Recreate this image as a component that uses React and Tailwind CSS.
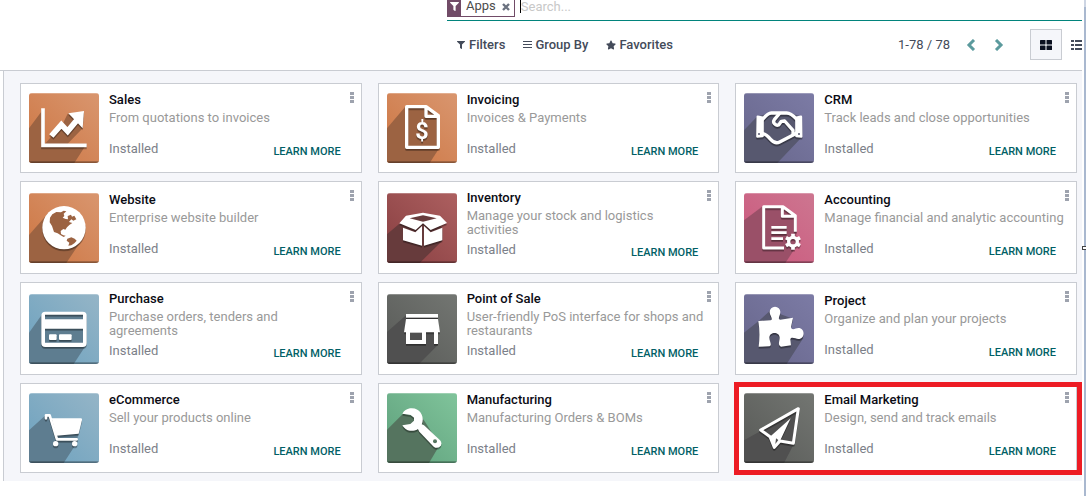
import { FaFilter, FaStar } from "react-icons/fa";

const TONES = {
  orange: { from: "#cf7c4b", to: "#d9966f", shade: "#9c6342" },
  purple: { from: "#6b6a90", to: "#7c7ba5", shade: "#57586f" },
  red: { from: "#8f4547", to: "#ad6060", shade: "#673b3c" },
  pink: { from: "#cb5d80", to: "#cd7690", shade: "#9a5068" },
  blue: { from: "#74a5c0", to: "#95b5c7", shade: "#5e7d90" },
  gray: { from: "#5d5f5c", to: "#737672", shade: "#505050" },
  green: { from: "#64a681", to: "#80c49b", shade: "#55745f" },
};

const APPS = [
  { id: "sales", name: "Sales", text: "From quotations to invoices", tone: "orange" },
  { id: "invoicing", name: "Invoicing", text: "Invoices & Payments", tone: "orange" },
  { id: "crm", name: "CRM", text: "Track leads and close opportunities", tone: "purple" },
  { id: "website", name: "Website", text: "Enterprise website builder", tone: "orange" },
  { id: "inventory", name: "Inventory", text: "Manage your stock and logistics activities", tone: "red" },
  { id: "accounting", name: "Accounting", text: "Manage financial and analytic accounting", tone: "pink" },
  { id: "purchase", name: "Purchase", text: "Purchase orders, tenders and agreements", tone: "blue" },
  { id: "pos", name: "Point of Sale", text: "User-friendly PoS interface for shops and restaurants", tone: "gray" },
  { id: "project", name: "Project", text: "Organize and plan your projects", tone: "purple" },
  { id: "ecommerce", name: "eCommerce", text: "Sell your products online", tone: "blue" },
  { id: "manufacturing", name: "Manufacturing", text: "Manufacturing Orders & BOMs", tone: "green" },
  { id: "email", name: "Email Marketing", text: "Design, send and track emails", tone: "gray", highlighted: true },
];

// long diagonal shadow behind each glyph, in the 210 unit icon box
const SHADES = {
  sales: "M0 106L37 56V163L48 152L68 130L99 97L116 62L165 56L161 106L116 152H173L136 210H0Z",
  invoicing: "M0 106L56 40H117L157 68V165L128 210H0Z",
  crm: "M0 112L38 72L75 60H140L174 72V132L100 210H0Z",
  website: "M0 126L58 60L152 150L112 210H0Z",
  inventory: "M0 124L37 92L108 64L166 104V143L98 210H0Z",
  accounting: "M0 82L56 40H117L157 68V160L124 210H0Z",
  purchase: "M0 116L40 60H170V155L134 210H0Z",
  pos: "M0 114L57 64H153V152L96 210H0Z",
  project: "M0 116L43 82L78 50L108 60L147 74L140 107L178 132L128 210H0Z",
  ecommerce: "M0 112L48 68L68 78H156L143 150L104 210H0Z",
  manufacturing: "M0 110L48 62L110 80L158 156L126 210H0Z",
  email: "M0 142L50 114L160 52L150 152L120 210H0Z",
};

function Glyph({ id, shade }) {
  switch (id) {
    case "sales":
      return (
        <>
          <path d="M42 46V157H173" fill="none" stroke="#fff" strokeWidth="11" />
          <path d="M67 129L97 95L116 115L145 80" fill="none" stroke="#fff" strokeWidth="17" />
          <path d="M165 54L118 61L161 106Z" fill="#fff" />
        </>
      );
    case "invoicing":
      return (
        <>
          <path d="M59 41H117L154 68V163H59ZM117 41V70H154" fill="none" stroke="#fff" strokeWidth="10" strokeLinejoin="round" />
          <text x="105" y="139" fill="#fff" textAnchor="middle" fontSize="70" fontWeight="700">$</text>
        </>
      );
    case "crm":
      return (
        <>
          <path d="M41 71L56 74V129L40 131Z" fill="#fff" stroke="#fff" strokeWidth="7" strokeLinejoin="round" />
          <path d="M171 71L157 74V129L172 131Z" fill="#fff" stroke="#fff" strokeWidth="7" strokeLinejoin="round" />
          <g fill="none" stroke="#fff" strokeWidth="10" strokeLinecap="round" strokeLinejoin="round">
            <path d="M57 78C66 67 73 60 82 60H128C138 60 148 68 157 78" />
            <path d="M57 122C66 124 73 131 80 139C88 148 98 152 107 147L146 127L157 120" />
            <path d="M106 62L91 80C85 88 94 100 104 96L112 85L122 84L147 112V124" />
          </g>
          <circle cx="45" cy="123" r="3" fill={shade} />
          <circle cx="165" cy="123" r="3" fill={shade} />
        </>
      );
    case "website":
      return (
        <>
          <circle cx="105" cy="104" r="65" fill="#fff" />
          <path
            d="M63 74L70 64L82 57L96 58L104 53L112 55L104 62L106 69L101 74L110 78L117 79L116 69L126 65L129 71L136 68L142 79L133 83L127 79L120 87L130 90L121 96L114 103L109 110L103 108L95 114L96 123L103 127L110 128L104 132L95 127L86 121L75 117L69 99L62 88Z"
            fill={shade}
          />
          <path d="M115 137L127 133L137 137L143 143L136 151L127 157L118 158L121 149L113 143Z" fill={shade} />
        </>
      );
    case "inventory":
      return (
        <>
          <path d="M37 91L57 68L108 59L159 68L180 90L131 111L108 91L86 111Z" fill="#fff" />
          <path d="M68 76L108 67L149 76L108 86Z" fill={shade} />
          <path d="M48 104L85 118L105 99V158L48 142Z" fill="#fff" />
          <path d="M111 99L131 118L166 104V142L111 158Z" fill="#fff" />
        </>
      );
    case "accounting":
      return (
        <>
          <g fill="none" stroke="#fff" strokeWidth="9" strokeLinejoin="round">
            <path d="M120 165H59V41H117L154 68V116M115 41V70H154" />
            <path d="M82 103H128M82 119H128M82 137H117" strokeWidth="8" />
          </g>
          <g transform="translate(147 146)">
            <circle r="13" fill="none" stroke="#fff" strokeWidth="10" />
            <path d="M0 -24V-14M0 24V14M21 -12L12 -7M21 12L12 7M-21 -12L-12 -7M-21 12L-12 7" stroke="#fff" strokeWidth="11" />
          </g>
        </>
      );
    case "purchase":
      return (
        <>
          <path
            d="M49 53H161Q173 53 173 65V147Q173 159 161 159H49Q37 159 37 147V65Q37 53 49 53ZM48 62V76H162V62ZM48 104V146H162V104Z"
            fill="#fff"
            fillRule="evenodd"
          />
          <rect x="60" y="121" width="23" height="17" rx="3" fill="#fff" />
          <rect x="90" y="121" width="38" height="17" rx="3" fill="#fff" />
        </>
      );
    case "pos":
      return (
        <>
          <path d="M57 60H153V71H57Z" fill="#fff" />
          <path d="M57 75H153L159 115H153V150H141V115H117V150H57V115H51Z" fill="#fff" />
          <path d="M69 116H105V138H69Z" fill={shade} />
        </>
      );
    case "project":
      return (
        <path
          d="M43 81L80 79C89 77 77 64 77 54A16 16 0 0 1 109 54C109 64 99 76 109 77L147 71L141 99C143 112 155 102 163 102C184 102 184 135 163 135C155 135 142 126 139 136L141 154L111 158C100 154 107 142 107 131C107 112 76 112 76 131C76 142 86 153 76 157L44 158Q49 118 43 81Z"
          fill="#fff"
        />
      );
    case "ecommerce":
      return (
        <>
          <path d="M51 76V67H62L84 139H143" fill="none" stroke="#fff" strokeWidth="8" strokeLinejoin="round" strokeLinecap="round" />
          <path d="M68 76H156Q160 76 159 81L149 122L82 128Z" fill="#fff" />
          <circle cx="80" cy="152" r="8" fill="#fff" />
          <circle cx="137" cy="152" r="8" fill="#fff" />
        </>
      );
    case "manufacturing":
      return (
        <>
          <path d="M46 62A33 34 0 1 1 46 97L70 93L81 83V74L71 66Z" fill="#fff" />
          <path d="M90 103L101 92L111 97L159 142C171 155 154 172 140 161L97 116Z" fill="#fff" />
          <circle cx="144" cy="145" r="6" fill={shade} />
        </>
      );
    default:
      return (
        <>
          <path d="M163 47L50 111L78 131L91 163L108 144L148 151Z" fill="none" stroke="#fff" strokeWidth="9" strokeLinejoin="round" />
          <path d="M140 76L78 131L91 164L108 144Z" fill="#fff" />
          <path d="M96 136L103 141L94 153Z" fill={shade} />
        </>
      );
  }
}

function AppIcon({ id, tone }) {
  const { from, to, shade } = TONES[tone];
  return (
    <svg viewBox="0 0 210 210" className="size-[70px] shrink-0 rounded-[3px]" aria-hidden="true">
      <defs>
        <linearGradient id={`bg-${id}`} x1="0.2" y1="0.8" x2="1" y2="0">
          <stop offset="0" stopColor={from} />
          <stop offset="1" stopColor={to} />
        </linearGradient>
      </defs>
      <rect width="210" height="210" fill={`url(#bg-${id})`} />
      <path d={SHADES[id]} fill={shade} />
      <rect width="210" height="3" fill="#fff" opacity="0.25" />
      <rect y="205" width="210" height="5" fill="#000" opacity="0.35" />
      <g className="drop-shadow-[0_5px_1px_rgba(0,0,0,0.4)]">
        <Glyph id={id} shade={shade} />
      </g>
    </svg>
  );
}

function AppCard({ app }) {
  return (
    <article className="relative flex items-center gap-[10px] border border-[#c9ccd2] bg-white py-2 pr-[11px] pl-2">
      <AppIcon id={app.id} tone={app.tone} />
      <div className="min-w-0 flex-1">
        <h2 className="text-[13px] leading-4 font-medium text-[#0b0b14]">{app.name}</h2>
        <p className="mt-[3px] min-h-[25px] text-[13px] leading-[14px] text-[#999]">{app.text}</p>
        <div className="flex h-7 items-start justify-between pt-1 pr-[9px]">
          <span className="text-[13px] leading-[18px] text-[#7c7f89]">Installed</span>
          <a href="#" className="text-[11px] leading-6 font-medium text-[#015f66] uppercase">
            Learn More
          </a>
        </div>
      </div>
      <button aria-label={`${app.name} options`} className="absolute top-2 right-[7px] text-[#9ea3ae]">
        <svg width="4" height="11" viewBox="0 0 4 11" fill="currentColor" className="block">
          <path d="M0 0H4V3H0ZM0 4H4V7H0ZM0 8H4V11H0Z" />
        </svg>
      </button>
      {app.highlighted && (
        <div className="pointer-events-none absolute -top-[2px] -right-[6px] -bottom-[3px] -left-[2px] border-[5px] border-[#ed1c24]" />
      )}
    </article>
  );
}

function Header() {
  return (
    <header className="grid grid-cols-[447px_1fr] border-b border-[#c9ccd2]">
      <div />
      <div className="min-w-0">
        <div className="flex h-[21px] items-start border-b border-[#01847c] text-[13px] leading-3">
          <div className="flex h-[17px] border-r border-b border-[#714b67] text-[#4c4c4c]">
            <span className="flex w-[14px] justify-center bg-[#714b67] pt-[2px] text-white">
              <FaFilter size={9} />
            </span>
            <span className="pl-[5px]">Apps</span>
            <button aria-label="Remove filter" className="flex h-3 items-center pt-[2px] pr-1 pl-[6px] text-[#6b7280]">
              <svg width="8" height="8" viewBox="0 0 8 8" stroke="currentColor" strokeWidth="2.4">
                <path d="M1 1L7 7M7 1L1 7" />
              </svg>
            </button>
          </div>
          <input
            aria-label="Search"
            placeholder="Search..."
            className="ml-[5px] h-[13px] min-w-0 flex-1 border-l border-black leading-3 outline-none placeholder:text-[#c8c8c8]"
          />
        </div>
        <div className="flex h-[49px] items-center justify-between overflow-hidden pb-[2px] pl-[10px] text-[13px] text-[#444b5a]">
          <div className="flex items-center gap-[18px] font-medium">
            <button className="flex items-center gap-1">
              <FaFilter size={8} /> Filters
            </button>
            <button className="flex items-center gap-[3px]">
              <svg width="9" height="9" viewBox="0 0 9 9" stroke="currentColor" shapeRendering="crispEdges">
                <path d="M0 1.5H9M0 4.5H9M0 7.5H9" />
              </svg>
              Group By
            </button>
            <button className="flex items-center gap-[3px]">
              <FaStar size={10} /> Favorites
            </button>
          </div>
          <div className="flex items-center">
            <span>1-78 / 78</span>
            <button aria-label="Previous" className="ml-4 text-[#5b9a9d]">
              <svg width="10" height="12" viewBox="0 0 10 12" fill="none" stroke="currentColor" strokeWidth="3">
                <path d="M8 1L3 6L8 11" />
              </svg>
            </button>
            <button aria-label="Next" className="ml-[18px] text-[#5b9a9d]">
              <svg width="10" height="12" viewBox="0 0 10 12" fill="none" stroke="currentColor" strokeWidth="3">
                <path d="M2 1L7 6L2 11" />
              </svg>
            </button>
            <button
              aria-label="Kanban view"
              className="ml-[26px] flex h-[31px] w-8 items-center justify-center border border-[#c9ccd2] bg-[#f5f6fa] text-[#0b1020]"
            >
              <svg width="12" height="10" viewBox="0 0 12 10" fill="currentColor">
                <rect width="5.5" height="4.5" rx="0.5" />
                <rect x="6.5" width="5.5" height="4.5" rx="0.5" />
                <rect y="5.5" width="5.5" height="4.5" rx="0.5" />
                <rect x="6.5" y="5.5" width="5.5" height="4.5" rx="0.5" />
              </svg>
            </button>
            <button aria-label="List view" className="ml-[9px] w-[11px] overflow-hidden">
              <svg width="13" height="10" viewBox="0 0 13 10" fill="currentColor" className="max-w-none">
                <path d="M0 0H3V2H0ZM4 0H13V2H4ZM0 4H3V6H0ZM4 4H13V6H4ZM0 8H3V10H0ZM4 8H13V10H4Z" />
              </svg>
            </button>
          </div>
        </div>
      </div>
    </header>
  );
}

export default function App() {
  return (
    <div className="flex min-h-screen bg-white font-[Roboto,sans-serif]">
      <div className="min-w-0 flex-1">
        <Header />
        <main className="ml-[3px] grid grid-cols-3 gap-x-4 gap-y-2 border-l border-[#c9ccd2] bg-[#f5f6fa] pt-3 pr-[5px] pb-2 pl-4">
          {APPS.map((app) => (
            <AppCard key={app.id} app={app} />
          ))}
        </main>
      </div>
      {/* edge of the neighbouring window, with its resize handle */}
      <div className="relative ml-[2px] flex w-[2px] flex-col">
        <div className="h-[7px] bg-[#cdd5e3]" />
        <div className="flex-1 bg-[#a9b8cf]" />
        <div className="absolute top-1/2 right-0 size-1 -translate-y-1/2 border border-r-0 border-[#444] bg-white" />
      </div>
    </div>
  );
}
